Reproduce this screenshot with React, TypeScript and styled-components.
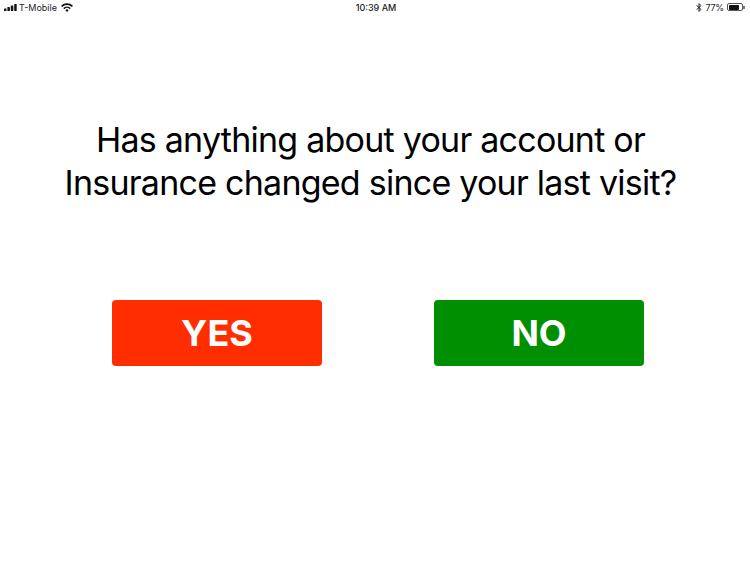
import { createGlobalStyle, styled } from 'styled-components';

const GlobalStyle = createGlobalStyle`
  html, body {
    margin: 0;
    padding: 0;
    background: #ffffff;
  }
  body {
    font-family: Inter, 'Liberation Sans', sans-serif;
  }
`;

function App() {
  return (
    <Page>
      <GlobalStyle />
      <StatusBar>
        <StatusLeft>
          <svg width="15" height="7" viewBox="0 0 15 7">
            <rect x="0" y="4.5" width="2.5" height="2.5" rx="0.4" fill="#111" />
            <rect x="3.4" y="3" width="2.5" height="4" rx="0.4" fill="#111" />
            <rect x="6.8" y="1.5" width="2.5" height="5.5" rx="0.4" fill="#111" />
            <rect x="10.2" y="0" width="2.5" height="7" rx="0.4" fill="#111" />
          </svg>
          <Carrier>T-Mobile</Carrier>
          <svg width="12" height="9" viewBox="0 0 12 9">
            <path d="M0 2.8 A8.5 8.5 0 0 1 12 2.8 L10.8 4 A6.8 6.8 0 0 0 1.2 4 Z" fill="#111" />
            <path d="M2.2 5 A5.3 5.3 0 0 1 9.8 5 L8.6 6.2 A3.6 3.6 0 0 0 3.4 6.2 Z" fill="#111" />
            <path d="M4.4 7.2 A2.2 2.2 0 0 1 7.6 7.2 L6 9 Z" fill="#111" />
          </svg>
        </StatusLeft>
        <Clock>10:39 AM</Clock>
        <StatusRight>
          <svg width="6" height="9" viewBox="0 0 6 9">
            <path d="M0.5 2.3 L5 6.4 L3 8.4 V0.6 L5 2.6 L0.5 6.7" fill="none" stroke="#111" strokeWidth="0.9" />
          </svg>
          <Percent>77%</Percent>
          <Battery>
            <BatteryLevel />
          </Battery>
        </StatusRight>
      </StatusBar>
      <Question>
        Has anything about your account or
        <br />
        Insurance changed since your last visit?
      </Question>
      <Choices>
        <ChoiceButton $color="#ff2d00">YES</ChoiceButton>
        <ChoiceButton $color="#008f00">NO</ChoiceButton>
      </Choices>
    </Page>
  );
}

const Page = styled.main`
  width: 750px;
  height: 563px;
  overflow: hidden;
  display: flex;
  flex-direction: column;
  align-items: center;
`;

const StatusBar = styled.header`
  width: 100%;
  height: 14px;
  box-sizing: border-box;
  padding: 0 3px 0 4px;
  display: grid;
  grid-template-columns: 1fr auto 1fr;
  align-items: center;
  font-size: 9px;
  color: #222;
`;

const StatusLeft = styled.div`
  display: flex;
  align-items: center;
  gap: 0;
`;

const Carrier = styled.span`
  margin-right: 4px;
`;

const Clock = styled.span`
  font-weight: 500;
  margin-left: 1px;
`;

const StatusRight = styled.div`
  display: flex;
  align-items: center;
  justify-content: flex-end;
  gap: 3px;
`;

const Percent = styled.span`
  letter-spacing: -0.2px;
`;

const Battery = styled.div`
  position: relative;
  width: 16px;
  height: 8px;
  box-sizing: border-box;
  border: 0.5px solid #555;
  border-radius: 2px;
  padding: 0.5px;
  margin-right: 4px;

  &::after {
    content: '';
    position: absolute;
    right: -2.5px;
    top: 2px;
    width: 1.5px;
    height: 3px;
    background: #777;
  }
`;

const BatteryLevel = styled.div`
  width: 77%;
  height: 100%;
  background: #111;
  border-radius: 1px;
`;

const Question = styled.h1`
  margin: 104px 9px 0 0;
  font-size: 34px;
  line-height: 43px;
  font-weight: 400;
  letter-spacing: -0.76px;
  text-align: center;
  color: #000;
  white-space: nowrap;
`;

const Choices = styled.div`
  margin: 96px 0 0 6px;
  display: flex;
  gap: 112px;
`;

const ChoiceButton = styled.button<{ $color: string }>`
  width: 210px;
  height: 66px;
  border: 0;
  border-radius: 4px;
  background: ${(props) => props.$color};
  color: #fff;
  font-family: inherit;
  font-size: 36px;
  font-weight: 700;
  padding: 0;
`;

export default App;
